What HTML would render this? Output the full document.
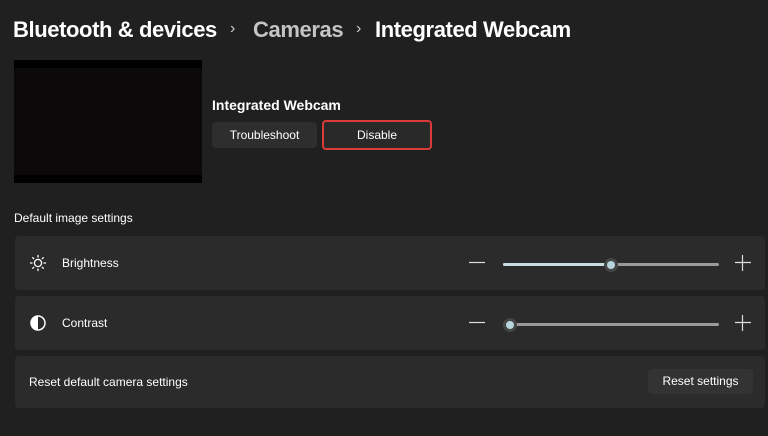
<!DOCTYPE html>
<html><head><style>
body{margin:0;width:768px;height:436px;background:#202020;font-family:"Liberation Sans",sans-serif;color:#fff;position:relative;overflow:hidden}
.a{position:absolute;white-space:nowrap}
.t{font-size:22px;top:17px;font-weight:bold;letter-spacing:-0.4px}
.card{position:absolute;left:15px;width:750px;background:#2b2b2b;border-radius:4px}
.btn{position:absolute;background:#2d2d2d;border-radius:4px;font-size:12px;text-align:center;color:#fff}
.track{position:absolute;height:3px;border-radius:2px;background:#9a9a9a}
.thumb{position:absolute;width:14px;height:14px;border-radius:50%;background:#454545}
.thumb:after{content:"";position:absolute;left:3px;top:3px;width:8px;height:8px;border-radius:50%;background:#b8d4dc}
</style></head><body>
<div class="a t" style="left:13px">Bluetooth &amp; devices</div>
<div class="a" style="left:230px;top:20px;font-size:16px;color:#ccc">›</div>
<div class="a t" style="left:253px;color:#c4c4c4">Cameras</div>
<div class="a" style="left:356px;top:20px;font-size:16px;color:#ccc">›</div>
<div class="a t" style="left:375px">Integrated Webcam</div>

<div class="a" style="left:14px;top:60px;width:188px;height:123px;background:#000"></div>
<div class="a" style="left:14px;top:68px;width:188px;height:107px;background:#0b0909"></div>

<div class="a" style="left:212px;top:97px;font-size:14px;font-weight:bold">Integrated Webcam</div>
<div class="btn" style="left:212px;top:122px;width:105px;height:26px;line-height:26px;background:#2e2e2e">Troubleshoot</div>
<div class="btn" style="left:322px;top:120px;width:106px;height:26px;line-height:26px;border:2px solid #d93a3a;background:#292929">Disable</div>

<div class="a" style="left:14px;top:211px;font-size:12px">Default image settings</div>

<div class="card" style="top:236px;height:54px"></div>
<svg class="a" style="left:29px;top:254px" width="18" height="18" viewBox="0 0 18 18" fill="none" stroke="#fff" stroke-width="1.3" stroke-linecap="round"><circle cx="9" cy="9" r="3.6"/><path d="M9 1.5v1.5M9 15v1.5M1.5 9H3M15 9h1.5M3.7 3.7l1 1M13.3 13.3l1 1M3.7 14.3l1-1M13.3 4.7l1-1"/></svg>
<div class="a" style="left:62px;top:256px;font-size:12px">Brightness</div>
<svg class="a" style="left:468px;top:254px" width="18" height="18"><path d="M1 8.5h16" stroke="#ddd" stroke-width="1.2"/></svg>
<div class="track" style="left:503px;top:263px;width:216px"></div>
<div class="track" style="left:503px;top:263px;width:108px;background:#c8dde2"></div>
<div class="thumb" style="left:604px;top:258px"></div>
<svg class="a" style="left:734px;top:254px" width="18" height="18"><path d="M1 8.5h16M8.5 1v16" stroke="#ddd" stroke-width="1.2"/></svg>

<div class="card" style="top:296px;height:54px"></div>
<svg class="a" style="left:29px;top:314px" width="18" height="18" viewBox="0 0 18 18"><circle cx="9" cy="9" r="7" fill="none" stroke="#fff" stroke-width="1.5"/><path d="M9 2a7 7 0 0 0 0 14z" fill="#fff"/></svg>
<div class="a" style="left:62px;top:316px;font-size:12px">Contrast</div>
<svg class="a" style="left:468px;top:314px" width="18" height="18"><path d="M1 8.5h16" stroke="#ddd" stroke-width="1.2"/></svg>
<div class="track" style="left:503px;top:323px;width:216px"></div>
<div class="thumb" style="left:503px;top:318px"></div>
<svg class="a" style="left:734px;top:314px" width="18" height="18"><path d="M1 8.5h16M8.5 1v16" stroke="#ddd" stroke-width="1.2"/></svg>

<div class="card" style="top:356px;height:52px"></div>
<div class="a" style="left:29px;top:375px;font-size:12px">Reset default camera settings</div>
<div class="btn" style="left:648px;top:369px;width:105px;height:25px;line-height:25px;background:#333">Reset settings</div>
</body></html>
